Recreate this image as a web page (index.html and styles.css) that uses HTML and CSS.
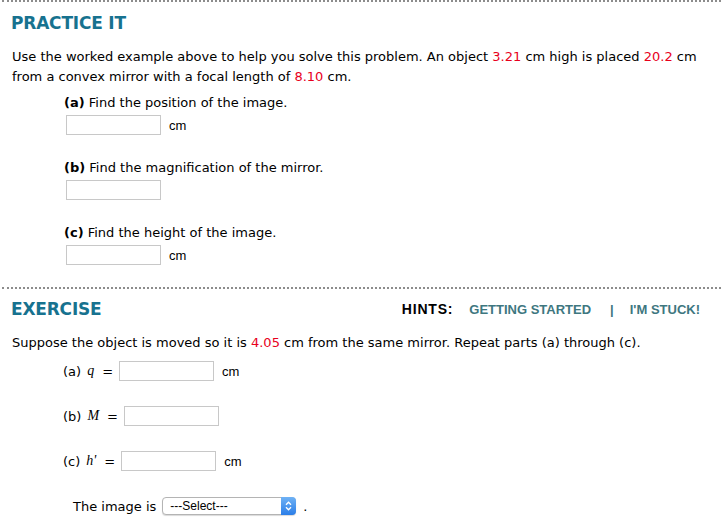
FILE: index.html
```html
<!DOCTYPE html>
<html lang="en">
<head>
    <meta charset="UTF-8">
    <title>Practice It</title>
    <link rel="stylesheet" href="styles.css">
</head>
<body>
    <div class="section practice">
        <h2 class="title">PRACTICE IT</h2>
        <p class="prompt">Use the worked example above to help you solve this problem. An object <span class="num">3.21</span> cm high is placed <span class="num">20.2</span> cm from a convex mirror with a focal length of <span class="num">8.10</span> cm.</p>

        <div class="part">
            <div class="part-label"><b>(a)</b> Find the position of the image.</div>
            <div class="answer"><input type="text" class="box"><span class="unit">cm</span></div>
        </div>
        <div class="part">
            <div class="part-label"><b>(b)</b> Find the magnification of the mirror.</div>
            <div class="answer"><input type="text" class="box"></div>
        </div>
        <div class="part">
            <div class="part-label"><b>(c)</b> Find the height of the image.</div>
            <div class="answer"><input type="text" class="box"><span class="unit">cm</span></div>
        </div>
    </div>

    <div class="section exercise">
        <div class="header-row">
            <h2 class="title">EXERCISE</h2>
            <div class="hints">
                <span class="hints-label">HINTS:</span>
                <a href="#" class="hint-link">GETTING STARTED</a>
                <span class="sep">|</span>
                <a href="#" class="hint-link">I'M STUCK!</a>
            </div>
        </div>
        <p class="prompt">Suppose the object is moved so it is <span class="num">4.05</span> cm from the same mirror. Repeat parts (a) through (c).</p>

        <div class="row"><span>(a)</span><i class="var">q</i><span class="eq">=</span><input type="text" class="box"><span class="unit">cm</span></div>
        <div class="row"><span>(b)</span><i class="var">M</i><span class="eq">=</span><input type="text" class="box"></div>
        <div class="row"><span>(c)</span><i class="var">h'</i><span class="eq">=</span><input type="text" class="box"><span class="unit">cm</span></div>

        <div class="row image-row">
            <span>The image is</span>
            <span class="select-wrap">
                <select class="pick">
                    <option>---Select---</option>
                    <option>real</option>
                    <option>virtual</option>
                </select>
                <span class="select-arrow">
                    <svg width="9" height="12" viewBox="0 0 9 12"><path d="M2 4.8 L4.5 2.3 L7 4.8 M2 7.2 L4.5 9.7 L7 7.2" fill="none" stroke="#fff" stroke-width="1.4"/></svg>
                </span>
            </span>
            <span>.</span>
        </div>
    </div>
</body>
</html>
```

FILE: styles.css
```css
body {
    margin: 0;
    font-family: "DejaVu Sans", Verdana, sans-serif;
    font-size: 13px;
    color: #000;
    background: #fff;
}
.section {
    border-top: 2px dotted #8c8c8c;
    margin: 0 4px 0 2px;
    padding: 11px 0 22px 9px;
}
.title {
    margin: 0;
    font-family: "DejaVu Sans", Verdana, sans-serif;
    font-size: 17px;
    letter-spacing: -0.2px;
    line-height: 20px;
    font-weight: bold;
    color: #17728f;
}
.prompt {
    margin: 14px 0 0 1px;
    line-height: 20px;
}
.num {
    color: #e8001c;
}
.part {
    margin-top: 6px;
    padding-left: 53px;
    margin-bottom: 23px;
}
.part:last-child {
    margin-bottom: 0;
}
.part-label {
    line-height: 20px;
}
.answer {
    display: flex;
    align-items: center;
    margin: 2px 0 0 2px;
}
.box {
    width: 95px;
    height: 20px;
    box-sizing: border-box;
    border: 1px solid #c8c8c8;
    padding: 0 3px;
    margin: 0;
    font-size: 13px;
}
.unit {
    margin-left: 8px;
    font-family: "Liberation Sans", Arial, sans-serif;
}
.exercise {
    padding-top: 10px;
}
.header-row {
    display: flex;
    justify-content: space-between;
    align-items: center;
    padding-right: 21px;
}
.hints {
    display: flex;
    align-items: center;
    font-family: "Liberation Sans", Arial, sans-serif;
    font-weight: bold;
    font-size: 13px;
}
.hints-label {
    font-size: 14px;
    letter-spacing: 0.8px;
    margin-right: 16px;
}
.hint-link {
    color: #3e777f;
    text-decoration: none;
}
.sep {
    color: #3e777f;
    margin: 0 16px 0 19px;
}
.row {
    display: flex;
    align-items: center;
    height: 20px;
    margin: 8px 0 25px 52px;
}
.row + .row {
    margin-top: 0;
}
.var {
    font-family: "Liberation Serif", "Times New Roman", serif;
    font-size: 14px;
    margin-left: 6px;
}
.eq {
    margin: 0 6px 0 8px;
}
.image-row {
    margin: -2px 0 0 62px;
}
.select-wrap {
    position: relative;
    display: inline-block;
    height: 18px;
    margin: 0 7px 0 6px;
}
.pick {
    appearance: none;
    -webkit-appearance: none;
    display: block;
    width: 134px;
    height: 18px;
    border: 1px solid #b4b4b4;
    border-radius: 4px;
    background: #fff;
    color: #000;
    font-family: "Liberation Sans", Arial, sans-serif;
    font-size: 12px;
    padding: 0 0 0 7px;
    margin: 0;
    box-shadow: 0 1px 1px rgba(0, 0, 0, 0.15);
}
.select-arrow {
    position: absolute;
    right: 0;
    top: 0;
    width: 15px;
    height: 18px;
    background: linear-gradient(#6fb2f5, #2b7ee8);
    border-radius: 0 4px 4px 0;
    display: flex;
    align-items: center;
    justify-content: center;
}
```
